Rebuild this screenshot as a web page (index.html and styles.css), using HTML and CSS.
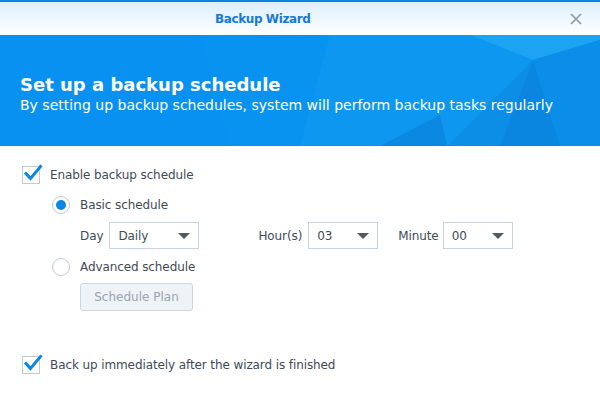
FILE: index.html
```html
<!DOCTYPE html>
<html>
<head>
<meta charset="utf-8">
<link rel="stylesheet" href="styles.css">
</head>
<body>
<div class="window">
  <header class="titlebar">
    <span class="title">Backup Wizard</span>
    <span class="close" aria-label="Close">
      <svg width="12" height="12" viewBox="0 0 12 12"><path d="M1 1 L11 11 M11 1 L1 11" stroke="#8f979f" stroke-width="1.6" fill="none"/></svg>
    </span>
  </header>
  <section class="banner">
    <svg class="banner-bg" width="600" height="111" viewBox="0 0 600 111" preserveAspectRatio="none">
      <rect width="600" height="111" fill="#0891f1"/>
      <polygon points="200,0 330,0 300,111 230,111" fill="#0a95f2" opacity="0.5"/>
      <polygon points="330,0 470,0 533,25 447,111 300,111" fill="#0e97f1"/>
      <polygon points="470,0 600,0 600,5 533,25" fill="#1ca4f3"/>
      <polygon points="533,25 600,5 600,111 560,111" fill="#0b8ee8"/>
      <polygon points="533,25 560,111 500,111" fill="#0a86e0"/>
      <polygon points="533,25 500,111 447,111" fill="#0c8de6"/>
      <polygon points="380,111 440,80 447,111" fill="#0a88e2"/>
    </svg>
    <div class="banner-text">
      <h1>Set up a backup schedule</h1>
      <p>By setting up backup schedules, system will perform backup tasks regularly</p>
    </div>
  </section>
  <main class="content">
    <label class="row check-row">
      <span class="checkbox checked">
        <svg width="20" height="18" viewBox="0 0 20 18"><path d="M3 9.5 L7.5 14.5 L17.5 2.5" stroke="#0a86e6" stroke-width="3" fill="none" stroke-linecap="square"/></svg>
      </span>
      <span>Enable backup schedule</span>
    </label>
    <div class="sub">
      <label class="row radio-row">
        <span class="radio on"><span class="dot"></span></span>
        <span>Basic schedule</span>
      </label>
      <div class="row fields">
        <span class="lbl">Day</span>
        <span class="select w-day"><span>Daily</span><i class="arrow"></i></span>
        <span class="lbl lbl-hour">Hour(s)</span>
        <span class="select w-small"><span>03</span><i class="arrow"></i></span>
        <span class="lbl lbl-min">Minute</span>
        <span class="select w-small"><span>00</span><i class="arrow"></i></span>
      </div>
      <label class="row radio-row adv">
        <span class="radio"></span>
        <span>Advanced schedule</span>
      </label>
      <div class="btn-row">
        <button class="btn" disabled>Schedule Plan</button>
      </div>
    </div>
    <label class="row check-row last">
      <span class="checkbox checked">
        <svg width="20" height="18" viewBox="0 0 20 18"><path d="M3 9.5 L7.5 14.5 L17.5 2.5" stroke="#0a86e6" stroke-width="3" fill="none" stroke-linecap="square"/></svg>
      </span>
      <span>Back up immediately after the wizard is finished</span>
    </label>
  </main>
</div>
</body>
</html>
```
FILE: styles.css
```css
* { box-sizing: border-box; }
html, body { margin: 0; padding: 0; background: #fff; }
body { width: 600px; height: 403px; overflow: hidden; font-family: "DejaVu Sans", Verdana, sans-serif; color: #414b55; }
.window { width: 600px; height: 403px; display: flex; flex-direction: column; }
.titlebar {
  height: 35px; border-top: 2px solid #0a84e0;
  background: linear-gradient(#dcefff, #ffffff);
  position: relative; display: flex; align-items: center; padding-left: 215px;
}
.title { font-size: 12px; font-weight: bold; color: #1679d4; letter-spacing: -0.4px; }
.close { position: absolute; right: 18px; top: 11px; width: 12px; height: 12px; display: block; }
.close svg { display: block; }
.banner { height: 111px; position: relative; overflow: hidden; }
.banner-bg { position: absolute; left: 0; top: 0; }
.banner-text { position: relative; padding: 39px 0 0 20px; color: #fff; }
.banner h1 { margin: 0; font-size: 18px; font-weight: bold; line-height: 22px; }
.banner p { margin: 0; font-size: 14px; line-height: 18px; }
.content { padding: 19px 0 0 22px; font-size: 12px; letter-spacing: -0.1px; }
.row { display: flex; align-items: center; }
.check-row { height: 20px; gap: 10px; }
.check-row.last { margin-top: 44px; }
.checkbox { width: 18px; height: 18px; border: 1px solid #c2cad3; position: relative; background: #fff; }
.checkbox svg { position: absolute; left: 0; top: -3px; }
.sub { padding-left: 30px; }
.radio-row { height: 20px; gap: 10px; margin-top: 10px; }
.radio-row.adv { margin-top: 8px; }
.radio { width: 18px; height: 18px; border: 1px solid #c2cad3; border-radius: 50%; display: flex; align-items: center; justify-content: center; background: #fff; }
.radio .dot { width: 10px; height: 10px; border-radius: 50%; background: #0a86e6; }
.fields { margin-top: 7px; height: 27px; padding-left: 28px; }
.lbl { margin-right: 6px; }
.lbl-hour { margin-left: 59px; }
.lbl-min { margin-left: 20px; margin-right: 4px; }
.select { height: 27px; border: 1px solid #c9d3dd; display: flex; align-items: center; justify-content: space-between; padding: 0 8px 0 8px; }
.w-day { width: 90px; }
.w-small { width: 70px; }
.arrow { width: 0; height: 0; border-left: 6px solid transparent; border-right: 6px solid transparent; border-top: 6px solid #505a64; }
.btn-row { padding-left: 28px; margin-top: 6px; }
.btn {
  width: 113px; height: 28px; border: 1px solid #cdd7e1; border-radius: 3px;
  background: #eef3f8; color: #9aa4ae; font-family: inherit; font-size: 12px; padding: 0;
}
```
